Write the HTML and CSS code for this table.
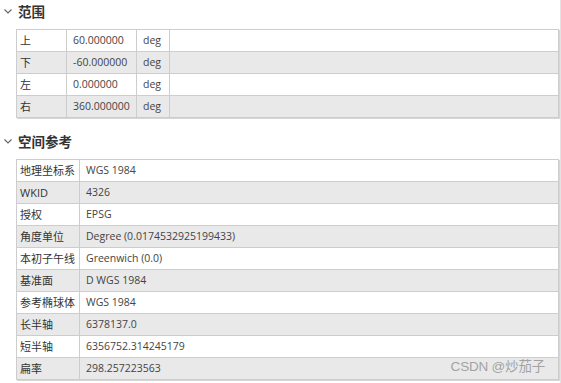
FILE: index.html
```html
<!DOCTYPE html>
<html lang="zh-CN">
<head>
<meta charset="utf-8">
<title>属性</title>
<link rel="stylesheet" href="styles.css">
</head>
<body>
<div class="panel">
  <section class="group">
    <div class="group-head">
      <svg class="chevron" width="8" height="5" viewBox="0 0 8 5"><path d="M0.5 0.5 L4 4 L7.5 0.5" fill="none" stroke="#666" stroke-width="1.2"/></svg>
      <span class="group-title">范围</span>
    </div>
    <table class="props extent">
      <colgroup><col class="c-label"><col class="c-value"><col class="c-unit"><col></colgroup>
      <tr><td class="label">上</td><td class="value">60.000000</td><td class="value">deg</td><td></td></tr>
      <tr><td class="label">下</td><td class="value">-60.000000</td><td class="value">deg</td><td></td></tr>
      <tr><td class="label">左</td><td class="value">0.000000</td><td class="value">deg</td><td></td></tr>
      <tr><td class="label">右</td><td class="value">360.000000</td><td class="value">deg</td><td></td></tr>
    </table>
  </section>

  <section class="group">
    <div class="group-head">
      <svg class="chevron" width="8" height="5" viewBox="0 0 8 5"><path d="M0.5 0.5 L4 4 L7.5 0.5" fill="none" stroke="#666" stroke-width="1.2"/></svg>
      <span class="group-title">空间参考</span>
    </div>
    <table class="props sref">
      <colgroup><col class="c-label2"><col></colgroup>
      <tr><td class="label">地理坐标系</td><td class="value">WGS 1984</td></tr>
      <tr><td class="label">WKID</td><td class="value">4326</td></tr>
      <tr><td class="label">授权</td><td class="value">EPSG</td></tr>
      <tr><td class="label">角度单位</td><td class="value">Degree (0.0174532925199433)</td></tr>
      <tr><td class="label">本初子午线</td><td class="value">Greenwich (0.0)</td></tr>
      <tr><td class="label">基准面</td><td class="value">D WGS 1984</td></tr>
      <tr><td class="label">参考椭球体</td><td class="value">WGS 1984</td></tr>
      <tr><td class="label">长半轴</td><td class="value">6378137.0</td></tr>
      <tr><td class="label">短半轴</td><td class="value">6356752.314245179</td></tr>
      <tr><td class="label">扁率</td><td class="value">298.257223563</td></tr>
    </table>
  </section>

  <div class="watermark">CSDN @炒茄子</div>
</div>
</body>
</html>
```

FILE: styles.css
```css
* { box-sizing: border-box; }

html, body {
  margin: 0;
  padding: 0;
  background: #ffffff;
}

.panel {
  position: relative;
  width: 561px;
  height: 383px;
  border-right: 1px solid #e3e3e3;
  font-family: "Noto Sans CJK SC", "Open Sans", sans-serif;
  color: #333;
  overflow: hidden;
}

.group + .group {
  margin-top: 12px;
}

.group-head {
  display: flex;
  align-items: center;
  gap: 6px;
  height: 29px;
  padding: 0 0 8px 4px;
}

.chevron {
  flex: none;
  margin-top: 1px;
}

.group-title {
  font-weight: bold;
  font-size: 13.5px;
  line-height: 18px;
  color: #333;
}

.props {
  margin-left: 16px;
  width: 543px;
  border-collapse: collapse;
  table-layout: fixed;
  box-shadow: 1px 1px 0 #d6d6d6;
}

.props td {
  border: 1px solid #cdcdcd;
  height: 22px;
  padding: 0 0 1px 0;
  white-space: nowrap;
  overflow: hidden;
}

.props tr:nth-child(even) td {
  background: #e9e9e9;
}

.props td.label {
  padding-left: 3px;
  font-family: "Open Sans", "Noto Sans CJK SC", sans-serif;
  font-size: 11px;
  color: #333;
}

.props td.value {
  padding-left: 6px;
  font-family: "Open Sans", "Noto Sans CJK SC", sans-serif;
  font-size: 10.5px;
  color: #444;
}

.c-label { width: 50px; }
.c-value { width: 70px; }
.c-unit { width: 33px; }
.c-label2 { width: 63px; }

.watermark {
  position: absolute;
  right: 15px;
  bottom: 8px;
  font-family: "Liberation Sans", "Noto Sans CJK SC", sans-serif;
  font-size: 13.5px;
  color: rgba(120, 120, 120, 0.65);
  letter-spacing: -0.2px;
}
```
